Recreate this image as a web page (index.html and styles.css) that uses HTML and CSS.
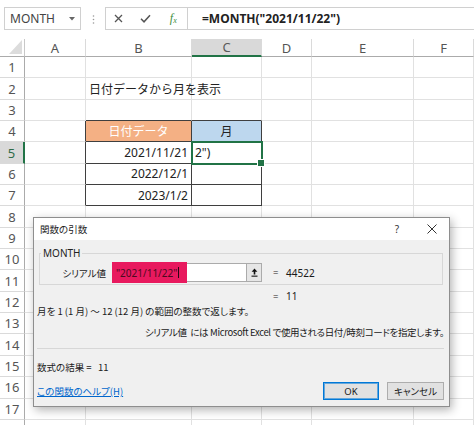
FILE: index.html
```html
<!DOCTYPE html>
<html lang="ja">
<head>
<meta charset="utf-8">
<title>MONTH</title>
<link rel="stylesheet" href="styles.css">
</head>
<body>
<div class="app">
  <div class="fbar">
    <div class="namebox"><span class="nm">MONTH</span><svg class="caret" width="6" height="4" viewBox="0 0 6 4"><polygon points="0,0 6,0 3,3.5" fill="#666"/></svg></div>
    <div class="grip"><svg width="3" height="9" viewBox="0 0 3 9"><circle cx="1.5" cy="1" r="0.8" fill="#999"/><circle cx="1.5" cy="4.5" r="0.8" fill="#999"/><circle cx="1.5" cy="8" r="0.8" fill="#999"/></svg></div>
    <div class="fbtns">
      <span class="fb"><svg width="9" height="9" viewBox="0 0 9 9"><path d="M1 1L8 8M8 1L1 8" stroke="#555" stroke-width="1.3" fill="none"/></svg></span>
      <span class="fb"><svg width="11" height="9" viewBox="0 0 11 9"><path d="M1 4.8L4 7.8L10 1.2" stroke="#555" stroke-width="1.5" fill="none"/></svg></span>
      <span class="fb fx">f<small>x</small></span>
    </div>
    <div class="formula">=MONTH("2021/11/22")</div>
  </div>

  <div class="sheet">
    <div class="corner"><svg width="25" height="18" viewBox="0 0 25 18"><polygon points="22,1 22,15 9,15" fill="#DCDCDC"/></svg></div>
    <div class="ch">A</div><div class="ch">B</div><div class="ch sel">C</div><div class="ch">D</div><div class="ch">E</div><div class="ch">F</div>

    <div class="rh">1</div><div class="c"></div><div class="c"></div><div class="c"></div><div class="c"></div><div class="c"></div><div class="c"></div>
    <div class="rh">2</div><div class="c"></div><div class="c">日付データから月を表示</div><div class="c"></div><div class="c"></div><div class="c"></div><div class="c"></div>
    <div class="rh">3</div><div class="c"></div><div class="c tb"></div><div class="c tb"></div><div class="c"></div><div class="c"></div><div class="c"></div>
    <div class="rh">4</div><div class="c tr"></div><div class="c tc th1">日付データ</div><div class="c tc th2">月</div><div class="c"></div><div class="c"></div><div class="c"></div>
    <div class="rh sel">5</div><div class="c tr"></div><div class="c tc num">2021/11/21</div><div class="c tc cur">2")</div><div class="c"></div><div class="c"></div><div class="c"></div>
    <div class="rh">6</div><div class="c tr"></div><div class="c tc num">2022/12/1</div><div class="c tc"></div><div class="c"></div><div class="c"></div><div class="c"></div>
    <div class="rh">7</div><div class="c tr"></div><div class="c tc num">2023/1/2</div><div class="c tc"></div><div class="c"></div><div class="c"></div><div class="c"></div>
    <div class="rh">8</div><div class="c"></div><div class="c"></div><div class="c"></div><div class="c"></div><div class="c"></div><div class="c"></div>
    <div class="rh">9</div><div class="c"></div><div class="c"></div><div class="c"></div><div class="c"></div><div class="c"></div><div class="c"></div>
    <div class="rh">10</div><div class="c"></div><div class="c"></div><div class="c"></div><div class="c"></div><div class="c"></div><div class="c"></div>
    <div class="rh">11</div><div class="c"></div><div class="c"></div><div class="c"></div><div class="c"></div><div class="c"></div><div class="c"></div>
    <div class="rh">12</div><div class="c"></div><div class="c"></div><div class="c"></div><div class="c"></div><div class="c"></div><div class="c"></div>
    <div class="rh">13</div><div class="c"></div><div class="c"></div><div class="c"></div><div class="c"></div><div class="c"></div><div class="c"></div>
    <div class="rh">14</div><div class="c"></div><div class="c"></div><div class="c"></div><div class="c"></div><div class="c"></div><div class="c"></div>
    <div class="rh">15</div><div class="c"></div><div class="c"></div><div class="c"></div><div class="c"></div><div class="c"></div><div class="c"></div>
    <div class="rh">16</div><div class="c"></div><div class="c"></div><div class="c"></div><div class="c"></div><div class="c"></div><div class="c"></div>
    <div class="rh">17</div><div class="c"></div><div class="c"></div><div class="c"></div><div class="c"></div><div class="c"></div><div class="c"></div>
    <div class="rh"></div><div class="c"></div><div class="c"></div><div class="c"></div><div class="c"></div><div class="c"></div><div class="c"></div>
  </div>

  <div class="dialog">
    <div class="dtitle">
      <span class="dname">関数の引数</span>
      <span class="qm">?</span>
      <span class="close"><svg width="10" height="10" viewBox="0 0 10 10"><path d="M0.5 0.5L9.5 9.5M9.5 0.5L0.5 9.5" stroke="#333" stroke-width="1" fill="none"/></svg></span>
    </div>
    <div class="dbody">
      <fieldset class="grp">
        <legend>MONTH</legend>
        <div class="argrow">
          <span class="arglabel">シリアル値</span>
          <div class="inp">
            <span class="hl">"2021/11/22"<i class="caretline"></i></span>
            <span class="upbtn"><svg width="7" height="9" viewBox="0 0 7 9"><path d="M3.5 0.5L0.6 3.8H2.7V6.6H4.3V3.8H6.4Z" fill="#111"/><rect x="0.5" y="7.6" width="6" height="1.1" fill="#111"/></svg></span>
          </div>
          <span class="eq">=</span><span class="val">44522</span>
        </div>
      </fieldset>
      <div class="res1"><span class="eq2">=</span><span class="val">11</span></div>
      <div class="desc1">月を 1 (1 月) ～ 12 (12 月) の範囲の整数で返します。</div>
      <div class="desc2">シリアル値&nbsp;&nbsp;には Microsoft Excel で使用される日付/時刻コードを指定します。</div>
      <div class="sep"></div>
      <div class="formres">数式の結果 =&nbsp;&nbsp;&nbsp;11</div>
      <div class="footer">
        <a class="help" href="#">この関数のヘルプ(H)</a>
        <span class="btn ok">OK</span>
        <span class="btn cancel">キャンセル</span>
      </div>
    </div>
  </div>
</div>
</body>
</html>
```

FILE: styles.css
```css
* { box-sizing: border-box; }
body {
  margin: 0;
  background: #fff;
  font-family: "Noto Sans", "Noto Sans CJK JP", sans-serif;
  color: #222;
}
.app {
  position: relative;
  width: 474px;
  height: 425px;
  overflow: hidden;
  background: #fff;
}

/* formula bar */
.fbar {
  height: 39px;
  padding-top: 7px;
  display: flex;
  align-items: flex-start;
}
.namebox {
  margin-left: 4px;
  width: 77px;
  height: 23px;
  border: 1px solid #D0D0D0;
  display: flex;
  align-items: center;
  padding-left: 5px;
  padding-right: 5px;
}
.nm {
  font-size: 12px;
  color: #444;
  flex: 1;
}
.caret { margin-top: 1px; }
.grip {
  width: 24px;
  height: 23px;
  display: flex;
  align-items: center;
  justify-content: center;
  padding-top: 1px;
}
.fbtns {
  width: 83px;
  height: 23px;
  border: 1px solid #D0D0D0;
  display: flex;
  align-items: center;
}
.fb {
  width: 28px;
  height: 21px;
  display: flex;
  align-items: center;
  justify-content: center;
}
.fb:first-child { margin-left: -1px; }
.fx {
  font-family: "Liberation Serif", serif;
  font-style: italic;
  font-size: 12px;
  color: #3E8E41;
}
.fx small { font-size: 8px; margin-top: 3px; }
.formula {
  flex: 1;
  height: 23px;
  border: 1px solid #D0D0D0;
  border-left: none;
  border-right: none;
  padding-left: 14px;
  display: flex;
  align-items: center;
  font-size: 12px;
  font-weight: 700;
  color: #222;
  white-space: nowrap;
}

/* sheet */
.sheet {
  display: grid;
  grid-template-columns: 25px 61px 106px 70px 50px 102px 60px;
  grid-template-rows: 18px repeat(18, 21.35px);
}
.corner {
  border-right: 1px solid #C8C8C8;
  border-bottom: 1px solid #ABABAB;
}
.corner svg { display: block; }
.ch {
  border-right: 1px solid #DADADA;
  border-bottom: 1px solid #ABABAB;
  display: flex;
  align-items: center;
  justify-content: center;
  font-size: 13px;
  color: #555;
}
.ch.sel {
  background: #D9D9D9;
  border-bottom: 2px solid #217346;
  color: #5a5a5a;
}
.rh {
  border-right: 1px solid #ABABAB;
  border-bottom: 1px solid #DADADA;
  display: flex;
  align-items: center;
  justify-content: center;
  font-size: 13px;
  color: #555;
}
.rh.sel {
  background: #D9D9D9;
  border-right: 2px solid #217346;
  color: #2f6b48;
}
.c {
  border-right: 1px solid #E1E1E1;
  border-bottom: 1px solid #E1E1E1;
  display: flex;
  align-items: center;
  padding: 0 3px;
  font-size: 12px;
  color: #222;
  white-space: nowrap;
  overflow: visible;
  min-width: 0;
}
.c.tb { border-bottom-color: #3F3F3F; }
.c.tr { border-right-color: #3F3F3F; }
.c.tc {
  border-right-color: #3F3F3F;
  border-bottom-color: #3F3F3F;
}
.th1 {
  background: #F4B084;
  color: #fff;
  justify-content: center;
}
.th2 {
  background: #BDD7EE;
  color: #222;
  justify-content: center;
}
.num { justify-content: flex-end; }
.cur {
  position: relative;
  outline: 2px solid #217346;
  outline-offset: -1px;
  z-index: 1;
}
.cur::after {
  content: "";
  position: absolute;
  right: -4px;
  bottom: -4px;
  width: 6px;
  height: 6px;
  background: #217346;
  border: 1px solid #fff;
}

/* dialog */
.dialog {
  position: absolute;
  left: 33px;
  top: 217px;
  width: 417px;
  border: 1px solid #8E8E8E;
  background: #F0F0F0;
  box-shadow: 2px 3px 9px rgba(0, 0, 0, 0.3);
  font-family: "Noto Sans CJK JP", "Noto Sans", sans-serif;
  font-feature-settings: "palt";
  font-size: 9.5px;
  color: #1a1a1a;
  z-index: 5;
}
.dtitle {
  height: 22px;
  background: #fff;
  display: flex;
  align-items: center;
  padding-left: 6px;
}
.dname { flex: 1; font-size: 9.5px; color: #222; }
.qm {
  width: 14px;
  text-align: center;
  font-family: "Noto Sans", sans-serif;
  font-size: 10px;
  color: #333;
}
.close {
  width: 20px;
  margin-left: 18px;
  margin-right: 7px;
  display: flex;
  justify-content: center;
}
.dbody {
  padding: 7px 5px 6px 3px;
}
.grp {
  margin: 0 1px 0 2px;
  border: 1px solid #D7D7D7;
  padding: 4px 0 2px 0;
  min-inline-size: 0;
}
.grp legend {
  font-family: "Noto Sans", sans-serif;
  font-size: 10px;
  line-height: 12px;
  padding: 0 2px;
  margin-left: 1px;
  color: #222;
}
.argrow {
  display: flex;
  align-items: center;
  height: 19px;
}
.arglabel {
  width: 66px;
  text-align: right;
  margin-right: 6px;
}
.inp {
  position: relative;
  width: 150px;
  height: 19px;
  background: #fff;
  border: 1px solid #ABABAB;
}
.hl {
  position: absolute;
  left: -1px;
  top: -2px;
  bottom: -2px;
  width: 75px;
  background: #E8195E;
  color: #4d0a20;
  display: flex;
  align-items: center;
  padding-left: 4px;
  font-family: "Noto Sans", sans-serif;
  font-size: 10px;
}
.caretline {
  display: inline-block;
  width: 1px;
  height: 11px;
  background: #2a0612;
  margin-left: 1px;
}
.upbtn {
  position: absolute;
  right: 0;
  top: 0;
  width: 15px;
  height: 17px;
  border-left: 1px solid #ABABAB;
  background: #E6E6E6;
  display: flex;
  align-items: center;
  justify-content: center;
}
.eq {
  margin-left: 11px;
  width: 13px;
  font-family: "Noto Sans", sans-serif;
}
.eq2 {
  width: 13px;
  display: inline-block;
  font-family: "Noto Sans", sans-serif;
}
.val {
  font-family: "Noto Sans", sans-serif;
  font-size: 10px;
}
.res1 {
  margin-top: 5px;
  margin-left: 236px;
  line-height: 12px;
}
.desc1 {
  margin-top: 2px;
  line-height: 12px;
  white-space: nowrap;
}
.desc2 {
  margin-top: 9px;
  line-height: 12px;
  text-align: right;
  letter-spacing: -0.35px;
  white-space: nowrap;
}
.sep {
  margin-top: 10px;
  height: 1px;
  background: #D7D7D7;
}
.formres {
  margin-top: 12px;
  line-height: 12px;
}
.footer {
  margin-top: 9px;
  height: 18px;
  display: flex;
  align-items: center;
}
.help {
  flex: 1;
  color: #0066CC;
  text-decoration: underline;
}
.btn {
  height: 18px;
  display: flex;
  align-items: center;
  justify-content: center;
  background: #E1E1E1;
  border: 1px solid #ADADAD;
  color: #1a1a1a;
}
.ok {
  width: 56px;
  border-color: #0078D7;
  box-shadow: inset 0 0 0 1px rgba(0, 120, 215, 0.55);
  font-family: "Noto Sans", sans-serif;
}
.cancel {
  width: 57px;
  margin-left: 8px;
}
```
